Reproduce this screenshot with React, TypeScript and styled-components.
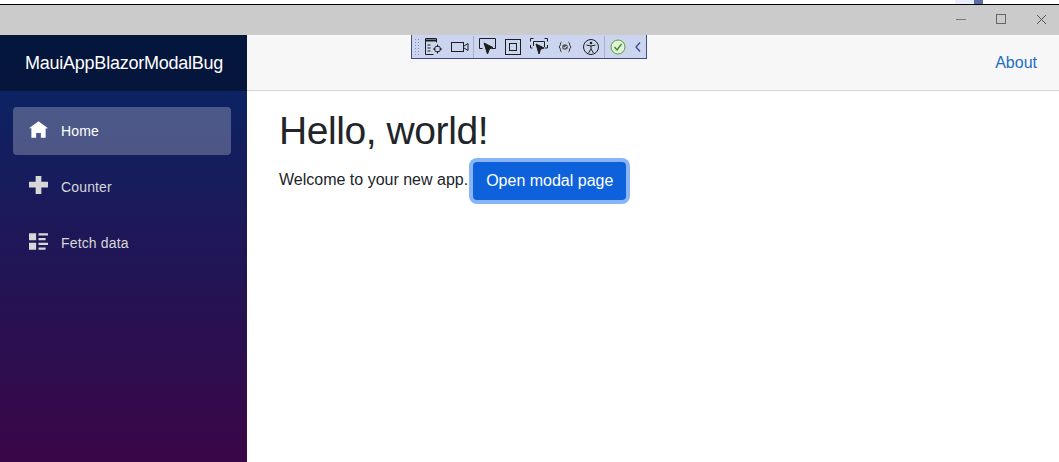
import React from "react";
import styled, { createGlobalStyle } from "styled-components";

const Global = createGlobalStyle`
  html, body {
    margin: 0;
    padding: 0;
    background: #fff;
    overflow: hidden;
  }
  body {
    font-family: "Liberation Sans", Arial, sans-serif;
  }
`;

const Page = styled.div`
  width: 1059px;
  height: 462px;
  display: flex;
  flex-direction: column;
  position: relative;
  overflow: hidden;
`;

const TopStrip = styled.div`
  height: 4px;
  background: #fff;
  border-bottom: 1px solid #000;
  display: flex;
  justify-content: flex-end;
  padding-right: 76px;
  flex-shrink: 0;
`;

const StripTabs = styled.div`
  display: flex;
  width: 28px;
  height: 4px;
  background: #e8eefb;
  span {
    margin-left: auto;
    width: 9px;
    background: #5a6ea5;
  }
`;

const TitleBar = styled.div`
  height: 30px;
  background: #cbcbcb;
  display: flex;
  justify-content: flex-end;
  flex-shrink: 0;
`;

const WinButton = styled.div`
  width: 40px;
  height: 30px;
  display: flex;
  align-items: center;
  justify-content: center;
  padding: 0 0 2px 4px;
  box-sizing: border-box;
  svg {
    display: block;
  }
`;

const Body = styled.div`
  flex: 1;
  display: flex;
  min-height: 0;
`;

const Sidebar = styled.div`
  width: 247px;
  flex-shrink: 0;
  background-image: linear-gradient(180deg, #052767 0%, #3a0647 100%);
  display: flex;
  flex-direction: column;
`;

const Brand = styled.div`
  height: 56px;
  box-sizing: border-box;
  padding: 1px 0 0 25px;
  background: rgba(0, 0, 0, 0.4);
  display: flex;
  align-items: center;
  color: #fff;
  font-size: 18px;
  letter-spacing: -0.24px;
  flex-shrink: 0;
`;

const Nav = styled.div`
  padding: 16px 16px 0 13px;
  display: flex;
  flex-direction: column;
  gap: 8px;
`;

const NavLink = styled.div<{ $active?: boolean }>`
  height: 48px;
  border-radius: 4px;
  display: flex;
  align-items: center;
  padding-left: 16px;
  font-size: 14px;
  letter-spacing: 0.15px;
  color: ${(p) => (p.$active ? "#fff" : "#d7d7d7")};
  background: ${(p) => (p.$active ? "rgba(255, 255, 255, 0.25)" : "transparent")};
  svg {
    width: 19px;
    height: 19px;
    margin-right: 13px;
    margin-top: -4px;
    flex-shrink: 0;
    fill: currentColor;
  }
`;

const Main = styled.div`
  flex: 1;
  display: flex;
  flex-direction: column;
  min-width: 0;
`;

const TopRow = styled.div`
  height: 55px;
  background: #f7f7f7;
  border-bottom: 1px solid #d6d5d5;
  display: flex;
  align-items: center;
  justify-content: flex-end;
  padding-right: 22px;
  flex-shrink: 0;
`;

const AboutLink = styled.a`
  color: #1b6ec2;
  font-size: 16px;
`;

const Content = styled.div`
  padding: 20px 32px 0;
`;

const Title = styled.h1`
  margin: 0 0 11px;
  font-size: 39px;
  font-weight: 400;
  line-height: 40px;
  letter-spacing: -0.42px;
  color: #212529;
`;

const Welcome = styled.div`
  display: flex;
  align-items: center;
  font-size: 16px;
  color: #212529;
`;

const WelcomeText = styled.span`
  padding-bottom: 2px;
`;

const PrimaryButton = styled.button`
  margin-left: 5px;
  height: 38px;
  padding: 0 13px;
  font: inherit;
  color: #fff;
  background: #0d62dc;
  border: none;
  border-radius: 4px;
  box-shadow: 0 0 0 4px #8ab4f8;
`;

const DevToolbar = styled.div`
  position: absolute;
  left: 411px;
  top: 35px;
  width: 236px;
  height: 24px;
  box-sizing: border-box;
  background: #ccd5f0;
  border: 1px solid #3f4a86;
  border-top: none;
  display: flex;
  align-items: center;
  padding-left: 2px;
`;

const Grip = styled.div`
  width: 6px;
  height: 18px;
  margin-right: 1px;
  background-image: radial-gradient(#8d93a8 0.8px, transparent 1px);
  background-size: 3px 3px;
  flex-shrink: 0;
`;

const ToolIcon = styled.div`
  width: 26px;
  height: 22px;
  display: flex;
  align-items: center;
  justify-content: center;
  flex-shrink: 0;
  svg {
    display: block;
  }
`;

const ToolDivider = styled.div`
  width: 1px;
  height: 22px;
  background: #a5aecb;
  flex-shrink: 0;
`;

const Chevron = styled.svg`
  margin-left: 3px;
  flex-shrink: 0;
`;

const ink = "#1e1e1e";

export default function App() {
  return (
    <Page>
      <Global />
      <TopStrip>
        <StripTabs>
          <span />
        </StripTabs>
      </TopStrip>
      <TitleBar>
        <WinButton>
          <svg width="10" height="10" viewBox="0 0 10 10">
            <path d="M0 5.5h10" stroke="#777" strokeWidth="1" />
          </svg>
        </WinButton>
        <WinButton>
          <svg width="10" height="10" viewBox="0 0 10 10">
            <rect x="0.5" y="0.5" width="9" height="9" fill="none" stroke="#666" />
          </svg>
        </WinButton>
        <WinButton>
          <svg width="11" height="11" viewBox="0 0 11 11">
            <path d="M1 1l9 9M10 1l-9 9" stroke="#555" strokeWidth="1" />
          </svg>
        </WinButton>
      </TitleBar>
      <Body>
        <Sidebar>
          <Brand>MauiAppBlazorModalBug</Brand>
          <Nav>
            <NavLink $active>
              <svg viewBox="0 -0.5 8 8">
                <path d="M4 0L0 3h1v4h2V5h2v2h2V3.03L8 3z" />
              </svg>
              Home
            </NavLink>
            <NavLink>
              <svg viewBox="0 0.4 8 8">
                <path d="M2.800 0v2.800H0v2.400h2.800V8h2.400V5.200H8V2.800H5.200V0z" />
              </svg>
              Counter
            </NavLink>
            <NavLink>
              <svg viewBox="0 -0.5 8 8">
                <path d="M0 0v3h3V0zm4 0v1h4V0zm0 2v1h3V2zM0 4v3h3V4zm4 0v1h4V4zm0 2v1h3V6z" />
              </svg>
              Fetch data
            </NavLink>
          </Nav>
        </Sidebar>
        <Main>
          <TopRow>
            <AboutLink>About</AboutLink>
          </TopRow>
          <Content>
            <Title>Hello, world!</Title>
            <Welcome>
              <WelcomeText>Welcome to your new app.</WelcomeText>
              <PrimaryButton>Open modal page</PrimaryButton>
            </Welcome>
          </Content>
        </Main>
      </Body>
      <DevToolbar>
        <Grip />
        <ToolIcon>
          <svg width="18" height="17" viewBox="0 0 18 17" fill="none" stroke={ink}>
            <path d="M11.500 4.500V.5h-11v16h8" />
            <path d="M.5 2.500h11" strokeWidth="2" />
            <path d="M2.500 7h3M2.500 10h3M2.500 13h3" />
            <circle cx="12.500" cy="11" r="3" />
            <path d="M12.500 6.500v2.500M12.500 13v2.500M8 11h2.500M14.500 11H17" />
          </svg>
        </ToolIcon>
        <ToolIcon>
          <svg width="18" height="12" viewBox="0 0 18 12" fill="none" stroke={ink}>
            <rect x="0.5" y="1.5" width="12" height="9" />
            <path d="M13 5l4-2.500v7L13 7" />
          </svg>
        </ToolIcon>
        <ToolDivider />
        <ToolIcon>
          <svg width="17" height="17" viewBox="0 0 17 17" fill="none" stroke={ink}>
            <path d="M3.500 10.500h-3v-10h16v10h-4" />
            <path d="M5 5l9 4.500-3.500 1.300L8.500 16z" fill={ink} />
          </svg>
        </ToolIcon>
        <ToolIcon>
          <svg width="16" height="16" viewBox="0 0 16 16" fill="none" stroke={ink}>
            <rect x="0.5" y="0.5" width="15" height="15" />
            <rect x="4.5" y="4.5" width="7" height="7" />
          </svg>
        </ToolIcon>
        <ToolIcon>
          <svg width="18" height="17" viewBox="0 0 18 17" fill="none" stroke={ink}>
            <path d="M.5 3.500v-3h3M14.500.5h3v3M.5 7v3h2M17.500 7v3h-3" />
            <path d="M3.500 8V3.500h11V9" />
            <path d="M6 6l8 4-3.500 1.300L9 16z" fill={ink} />
          </svg>
        </ToolIcon>
        <ToolIcon>
          <svg width="14" height="12" viewBox="0 0 14 12" fill="none" stroke="#333">
            <path d="M3.500 1C2 1 3 5 1 6c2 1 1 5 2.500 5M10.500 1c1.500 0 .5 4 2.500 5-2 1-1 5-2.500 5" />
            <circle cx="7" cy="6" r="2.800" fill="#555" stroke="none" />
            <path d="M5.500 6l1.200 1.200L8.500 5" stroke="#e8ecf8" strokeWidth="1" />
          </svg>
        </ToolIcon>
        <ToolIcon>
          <svg width="16" height="16" viewBox="0 0 16 16" fill="none" stroke={ink}>
            <circle cx="8" cy="8" r="7.500" />
            <circle cx="8" cy="4" r="1.300" fill={ink} stroke="none" />
            <path d="M3.500 6L8 7l4.500-1M8 7v3M8 10l-2.500 4M8 10l2.500 4" />
          </svg>
        </ToolIcon>
        <ToolDivider />
        <ToolIcon>
          <svg width="16" height="16" viewBox="0 0 16 16" fill="none">
            <circle cx="8" cy="8" r="7" fill="#e4f2dc" stroke="#5aa02c" />
            <path d="M4.500 8l2.500 3 4.500-6" stroke="#2e8b2e" strokeWidth="1.300" />
          </svg>
        </ToolIcon>
        <Chevron width="8" height="10" viewBox="0 0 8 10" fill="none" stroke="#3f4a86" strokeWidth="1.300">
          <path d="M6 .5L2 5l4 4.500" />
        </Chevron>
      </DevToolbar>
    </Page>
  );
}
